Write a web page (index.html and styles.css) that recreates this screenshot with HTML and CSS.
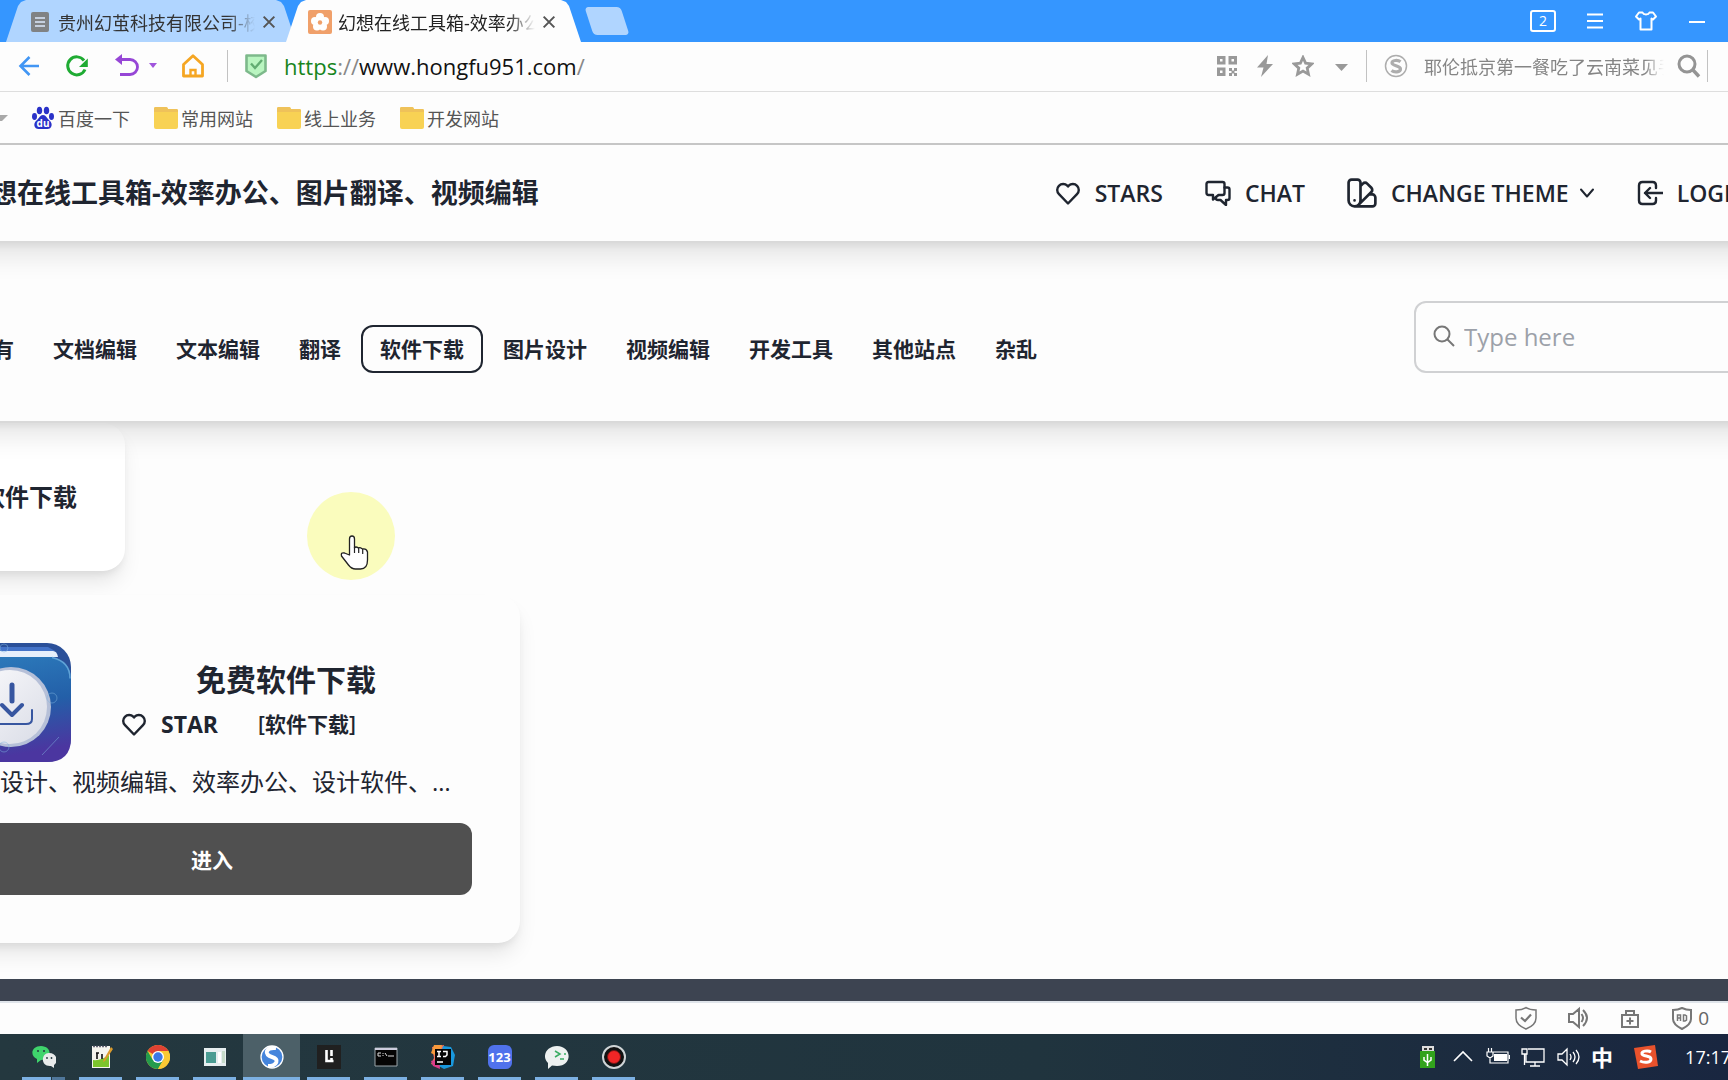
FILE: index.html
```html
<!DOCTYPE html>
<html lang="zh-CN">
<head>
<meta charset="utf-8">
<title>幻想在线工具箱-效率办公、图片翻译、视频编辑</title>
<link rel="stylesheet" href="styles.css">
</head>
<body>
<svg class="defs" aria-hidden="true">
  <symbol id="heart" viewBox="0 0 26 26"><path d="M13 23.500 L4 14.200 A5.900 5.900 0 0 1 12.300 5.700 L13 6.500 L13.700 5.700 A5.900 5.900 0 0 1 22 14.200 Z" fill="none" stroke="currentColor" stroke-width="2.400" stroke-linejoin="round"/></symbol>
  <symbol id="folder" viewBox="0 0 24 24"><path d="M0 2.500Q0 1 1.500 1H12q1.500 0 2 2h8.500Q24 3 24 4.500V21q0 2-2 2H2q-2 0-2-2Z" fill="#f8d254"/><path d="M0 2.500Q0 1 1.500 1H12q1.500 0 2 2h8.500Q24 3 24 4.500V6H0Z" fill="#efc25a"/></symbol>
  <symbol id="sogou" viewBox="0 0 24 24"><circle cx="12" cy="12" r="10.500" fill="none" stroke="currentColor" stroke-width="1.500"/><path d="M16.500 7.800C14 5.800 8 6 8 9s8.500 2.500 8.500 6-6.500 3.500-9 1.500" fill="none" stroke="currentColor" stroke-width="3.200"/></symbol>
</svg>

<header class="titlebar">
  <div class="tab tab-idle">
    <svg class="tab-icon" viewBox="0 0 24 24"><rect x="3" y="2" width="18" height="20" rx="2" fill="#808284"/><path d="M7 8h10M7 12h10M7 16h10" stroke="#dbe9fb" stroke-width="1.600"/></svg>
    <span class="tab-title">贵州幻茧科技有限公司-校园</span>
    <button class="tab-close" aria-label="关闭"><svg viewBox="0 0 12 12"><path d="M2 2l8 8M10 2l-8 8"/></svg></button>
  </div>
  <div class="tab tab-active">
    <svg class="tab-icon" viewBox="0 0 24 24"><rect width="24" height="24" rx="2" fill="#f0a06a"/><g fill="#fff"><circle cx="12" cy="7" r="4"/><circle cx="17" cy="11" r="4"/><circle cx="15" cy="16.500" r="4"/><circle cx="9" cy="16.500" r="4"/><circle cx="7" cy="11" r="4"/><circle cx="12" cy="12" r="4"/></g><circle cx="12" cy="12.500" r="2.200" fill="#f0a06a"/></svg>
    <span class="tab-title">幻想在线工具箱-效率办公、图</span>
    <button class="tab-close" aria-label="关闭"><svg viewBox="0 0 12 12"><path d="M2 2l8 8M10 2l-8 8"/></svg></button>
  </div>
  <button class="new-tab" aria-label="新标签"></button>
  <div class="window-tools">
    <button class="tab-count">2</button>
    <button aria-label="菜单"><svg viewBox="0 0 24 24"><path d="M4 5.500h16M4 12h16M4 18.500h16" stroke-width="2"/></svg></button>
    <button aria-label="皮肤"><svg viewBox="0 0 24 24"><path d="M8.500 3.500C9.500 6 14.500 6 15.500 3.500H19L22 7.500 19 10.500 17.500 9.500V20.500H6.500V9.500L5 10.500 2 7.500 5 3.500Z" stroke-width="2" stroke-linejoin="round"/></svg></button>
    <button aria-label="最小化"><svg viewBox="0 0 24 24"><path d="M4 13h16" stroke-width="2"/></svg></button>
  </div>
</header>

<div class="toolbar">
  <nav class="history">
    <button aria-label="后退"><svg viewBox="0 0 24 24"><path d="M22 12H4M12.500 3L3.500 12l9 9" stroke="#4296f4" stroke-width="2.600"/></svg></button>
    <button aria-label="刷新"><svg viewBox="0 0 24 24"><path d="M20 15.500A9 9 0 1 1 19 6.500" stroke="#1fab33" stroke-width="3"/><path d="M22.800 4.500V13H14Z" fill="#1fab33"/></svg></button>
    <div class="undo">
      <button aria-label="恢复"><svg viewBox="0 0 24 24"><path d="M5 5.500h10a7.500 7.500 0 0 1 0 15H5" stroke="#9646d6" stroke-width="2.800"/><path d="M0 5.500L7 0v11Z" fill="#9646d6"/></svg></button>
      <svg class="mini-caret" viewBox="0 0 8 6"><path d="M0 0h8L4 5Z" fill="#a055dc"/></svg>
    </div>
    <button aria-label="主页"><svg viewBox="0 0 24 24"><path d="M2.500 10.500L12 1.800l9.500 8.700V22h-19Z" stroke="#f5a623" stroke-width="2.800" stroke-linejoin="round"/><path d="M9.500 22v-6h5v6" stroke="#f5a623" stroke-width="2.400"/></svg></button>
  </nav>
  <span class="divider"></span>
  <svg class="shield" viewBox="0 0 24 26"><path d="M2.500 2.500h19V18L12 24 2.500 18Z" fill="#b9f5c0" stroke="#7db98b" stroke-width="2.600" stroke-linejoin="round"/><path d="M7 10.500l4 4.500 7-8" fill="none" stroke="#62ad72" stroke-width="2.400"/></svg>
  <div class="address" role="textbox" aria-label="地址" contenteditable="true"><span class="scheme">https</span><span class="slashes">://</span>www.hongfu951.com<span class="slashes">/</span></div>
  <div class="page-tools">
    <button aria-label="二维码"><svg viewBox="0 0 22 22"><path d="M2.500 2.500h5.500v5.500h-5.500ZM14 2.500h5.500v5.500H14ZM2.500 14h5.500v5.500h-5.500Z" stroke="#999" stroke-width="3"/><path d="M13 13h3v3h-3ZM18 13h3v3h-3ZM15.500 15.500h3v3h-3ZM13 18h3v3h-3ZM18 18h3v3h-3Z" fill="#999"/></svg></button>
    <button aria-label="加速"><svg viewBox="0 0 22 22"><path d="M14 0L3 12.500h6.500L7 22 19 9H12.500Z" fill="#999"/></svg></button>
    <button aria-label="收藏"><svg viewBox="0 0 22 22"><path d="M11 2.500l2.600 5.700 6.200.7-4.600 4.200 1.300 6.100-5.500-3.100-5.500 3.100 1.300-6.100L2.200 8.900l6.200-.7Z" stroke="#999" stroke-width="2.800"/></svg></button>
    <button aria-label="更多"><svg viewBox="0 0 22 22"><path d="M5 9h13l-6.500 7Z" fill="#999"/></svg></button>
  </div>
  <span class="divider"></span>
  <form class="engine">
    <svg class="engine-logo" viewBox="0 0 24 24"><use href="#sogou"/></svg>
    <input class="engine-input" aria-label="搜索" placeholder="耶伦抵京第一餐吃了云南菜见手青">
    <button type="button" aria-label="搜索"><svg viewBox="0 0 24 24"><circle cx="10" cy="10" r="8" stroke="#949494" stroke-width="3"/><path d="M16 16l6 6.500" stroke="#949494" stroke-width="3.400"/></svg></button>
  </form>
  <span class="divider"></span>
</div>

<nav class="bookmarks">
  <svg class="mini-caret" viewBox="0 0 8 6"><path d="M0 0h8L2 6H0Z" fill="#a9a9a9"/></svg>
  <a href="#baidu"><svg viewBox="0 0 24 24"><g fill="#2a32c8"><ellipse cx="8.500" cy="4.500" rx="2.700" ry="3.800"/><ellipse cx="15.500" cy="4.500" rx="2.700" ry="3.800"/><ellipse cx="3.500" cy="10.500" rx="2.500" ry="3.400"/><ellipse cx="20.500" cy="10.500" rx="2.500" ry="3.400"/><path d="M12 9c3 0 4 3.500 6.500 5.500 4 3.500 2 8.500-2 8.500H7.500c-4 0-6-5-2-8.500C8 12.500 9 9 12 9Z"/></g><text class="paw-text" x="12" y="21" text-anchor="middle" fill="#fff">du</text></svg>百度一下</a>
  <a href="#common"><svg viewBox="0 0 24 24"><use href="#folder"/></svg>常用网站</a>
  <a href="#online"><svg viewBox="0 0 24 24"><use href="#folder"/></svg>线上业务</a>
  <a href="#dev"><svg viewBox="0 0 24 24"><use href="#folder"/></svg>开发网站</a>
</nav>

<main class="viewport">
  <div class="page">
    <header class="site-header">
      <h1>幻想在线工具箱-效率办公、图片翻译、视频编辑</h1>
      <nav class="site-nav">
        <a href="#stars"><svg viewBox="0 0 26 26"><use href="#heart"/></svg>STARS</a>
        <a href="#chat"><svg viewBox="0 0 26 26"><path d="M3.500 2h14q2 0 2 2v9q0 2-2 2h-4L8 19.500V15H3.500q-2 0-2-2V4q0-2 2-2Z"/><path d="M19.500 7.500h3q2 0 2 2v8.500q0 2-2 2h-1.500v5L15.500 20H13q-2 0-2.500-2"/></svg>CHAT</a>
        <button><svg class="swatch" viewBox="0 0 24 24"><path d="M7 21a4 4 0 01-4-4V5a2 2 0 012-2h4a2 2 0 012 2v12a4 4 0 01-4 4zm0 0h12a2 2 0 002-2v-4a2 2 0 00-2-2h-2.343M11 7.343l1.657-1.657a2 2 0 012.828 0l2.829 2.829a2 2 0 010 2.828l-8.486 8.485M7 17h.01" transform="translate(-2.300 -2.300) scale(1.190)"/></svg>CHANGE THEME<svg class="chevron" viewBox="0 0 16 16"><path d="M2 4.500l6 7 6-7"/></svg></button>
        <a href="#login"><svg viewBox="0 0 26 26"><path d="M19 8V5.500q0-3.500-3.500-3.500h-10Q2 2 2 5.500v15Q2 24 5.500 24h10q3.500 0 3.500-3.500V18M26 13H8M13 8l-5 5 5 5"/></svg>LOGIN</a>
      </nav>
    </header>

    <section class="filters">
      <div class="categories">
        <button>所有</button><button>文档编辑</button><button>文本编辑</button><button>翻译</button><button class="selected">软件下载</button><button>图片设计</button><button>视频编辑</button><button>开发工具</button><button>其他站点</button><button>杂乱</button>
      </div>
      <label class="search">
        <svg viewBox="0 0 22 22"><circle cx="9" cy="9" r="7.500"/><path d="M14.500 14.500l6.500 6.500"/></svg>
        <input type="text" placeholder="Type here" aria-label="搜索工具">
      </label>
    </section>

    <h2 class="crumb">软件下载</h2>

    <article class="card">
      <div class="card-top">
        <svg class="card-image" viewBox="0 0 119 119" role="img" aria-label="软件下载图标">
          <defs><linearGradient id="cover" x1="0" y1="0" x2="0.200" y2="1"><stop offset="0" stop-color="#2d7dbd"/><stop offset="0.550" stop-color="#235fa8"/><stop offset="1" stop-color="#4b36a0"/></linearGradient><linearGradient id="disc" x1="0" y1="0" x2="1" y2="1"><stop offset="0" stop-color="#fafafc"/><stop offset="1" stop-color="#d9dce6"/></linearGradient></defs>
          <rect width="119" height="119" rx="24" fill="#2b5099"/>
          <path d="M0 8H101q4 0 5 6H0Z" fill="#e6effb"/><path d="M0 4H96l7 4H0Z" fill="#4473c8"/>
          <path d="M0 14H100q19 4 19 22V95q0 24-24 24H24Q0 119 0 95Z" fill="url(#cover)"/>
          <path d="M100 14.500q18 4 18 21" fill="none" stroke="#60a3d7" stroke-width="1.500"/>
          <circle cx="59" cy="64" r="40" fill="#b6c0d8"/><circle cx="58" cy="64" r="37" fill="url(#disc)"/>
          <g fill="none" stroke="#3756a0" stroke-linecap="round" stroke-linejoin="round"><path d="M60 42V58" stroke-width="5"/><path d="M50 62l10 10 10-10" stroke-width="4"/><path d="M80 67v9q0 5-6 5H46q-6 0-6-5V67" stroke-width="2"/></g>
          <g fill="none" stroke="#80b4df" opacity="0.500"><circle cx="52" cy="5" r="4"/><circle cx="100" cy="55" r="5"/><circle cx="52" cy="104" r="5"/><path d="M90 112l17-18" stroke-width="1"/></g>
        </svg>
        <div class="card-head">
          <h3>免费软件下载</h3>
          <div class="card-actions">
            <button class="star"><svg viewBox="0 0 26 26"><use href="#heart"/></svg>STAR</button>
            <span class="tag">[软件下载]</span>
          </div>
        </div>
      </div>
      <p class="summary">图片设计、视频编辑、效率办公、设计软件、影音播放、系统工具</p>
      <button class="enter">进入</button>
    </article>
  </div>
  <footer class="site-footer"></footer>
  <svg class="pointer" viewBox="0 0 88 88" aria-hidden="true"><circle cx="44" cy="44" r="44" fill="#fafcbd"/><path d="M42.500 63V47q0-3 2.500-3t2.500 3v9q1-2 4 0 1-1 4 1 4-1 5 3v8q0 9-7 9h-5q-4 0-7-4l-7-9q-1-4 3-3Z" fill="#fff" stroke="#222" stroke-width="1.300" stroke-linejoin="round"/><path d="M47.500 55v6M51.700 56v5M55.700 57v5" stroke="#222" stroke-width="1.200"/></svg>
</main>

<div class="statusbar">
  <svg viewBox="0 0 24 24"><path d="M12 1.500C9 3.500 5 4 2 4v8c0 5 5 9 10 11 5-2 10-6 10-11V4c-3 0-7-.500-10-2.500Z"/><path d="M7 11.500l4 3.500 6-6.500" stroke-width="2.200"/></svg>
  <svg viewBox="0 0 24 24"><path d="M3 8h4l6-5v18l-6-5H3Z" stroke-width="2"/><path d="M15.500 8q3 4 0 8M17 4q8 8 0 16" stroke-width="2"/></svg>
  <svg viewBox="0 0 24 24"><path d="M4 9h16v12H4ZM8 9V5h8v4M12 11.500v7M8.500 15h7" stroke-width="2"/></svg>
  <span class="ad-count"><svg viewBox="0 0 24 24"><path d="M12 2C9 3.500 5 4 3 4v9c0 4 5 8 9 10 4-2 9-6 9-10V4c-2 0-6-.500-9-2Z" stroke-width="2"/><path d="M7.500 15V9h3v6M7.500 12h3M13.500 9h1.500l1.500 1v4l-1.500 1h-1.500Z"/></svg>0</span>
</div>

<footer class="taskbar">
  <div class="apps">
    <button class="app app-grouped" aria-label="微信"><svg viewBox="0 0 24 24"><path d="M9 1c11 0 12 14 0 14l-4 3v-4C-3 10 0 1 9 1Z" fill="#3fd46c"/><path d="M17 8c9 0 9 10 5 12v3l-3-2C8 22 9 8 17 8Z" fill="#e8ebeb"/><g fill="#24383f"><circle cx="6" cy="6" r="1"/><circle cx="12" cy="6" r="1"/><circle cx="15" cy="13" r="0.900"/><circle cx="19.500" cy="13" r="0.900"/></g></svg></button>
    <button class="app" aria-label="记事本"><svg viewBox="0 0 24 24"><path d="M3 1h18v22H3Z" fill="#f5f5ee"/><path d="M4 15q8 1 16-5v12H4Z" fill="#7cc52c"/><path d="M8 8v6M7 8h3M13 9v5" stroke="#111" stroke-width="1.600"/><path d="M22 2l2 2-8 12-2 1 1-3Z" fill="#dd9c2c"/><path d="M4 1.500h14" stroke="#667" stroke-width="1.500" stroke-dasharray="2 1"/></svg></button>
    <button class="app" aria-label="Chrome"><svg viewBox="0 0 24 24"><circle cx="12" cy="12" r="12" fill="#fac934"/><path d="M12 12L1.600 6A12 12 0 0 1 22.400 6Z" fill="#df4233"/><path d="M1.600 6A12 12 0 0 0 12 24L17.500 14.500 12 12 6.500 14.500Z" fill="#249b4c"/><path d="M12 6h10.400A12 12 0 0 1 12 24l6-10Z" fill="#fac934"/><circle cx="12" cy="12" r="6" fill="#fff"/><circle cx="12" cy="12" r="4.700" fill="#3b78e7"/></svg></button>
    <button class="app" aria-label="资源"><svg viewBox="0 0 24 24"><path d="M1 3h22v18H1Z" fill="#e6eef0"/><path d="M3 7h10v11H3Z" fill="#4a9c93"/><path d="M15 7h3v11h-3Z" fill="#fff"/><path d="M19 6h3v12h-3Z" fill="#c6dbca"/></svg></button>
    <button class="app current" aria-label="搜狗浏览器"><svg viewBox="0 0 24 24"><circle cx="12" cy="12" r="11" fill="#4585dc" stroke="#fff" stroke-width="1.300"/><path d="M16 3C5 2 4 10 12 12s5 9-4 9" fill="none" stroke="#fff" stroke-width="4"/></svg></button>
    <button class="app" aria-label="LI"><svg viewBox="0 0 24 24"><path d="M0 0h24v24H0Z" fill="#202020"/><path d="M9.500 5v11h7M14.500 5v6M14.500 13v3" fill="none" stroke="#fff" stroke-width="2.600"/></svg></button>
    <button class="app" aria-label="命令行"><svg viewBox="0 0 24 24"><path d="M1 3h22v18H1Z" fill="#050505" stroke="#9ba5aa"/><path d="M1 3h22v2H1Z" fill="#ccd"/><path d="M4 8h3M4 11h3M4 8v3M9 8v1M9 10v1M11 8l2 3M14 11h6" fill="none" stroke="#ddd"/></svg></button>
    <button class="app" aria-label="IDEA"><svg viewBox="0 0 24 24"><path d="M1 2l12-2-4 22-9-3 3-6Z" fill="#f6715e"/><path d="M3 0h8L8 12 0 8Z" fill="#f79a3c"/><path d="M12 1l8 1 4 8-2 11-9 3-7-4Z" fill="#1998dd"/><path d="M0 16l8-2 1 10-7-3Z" fill="#da3c8a"/><path d="M4 4h16v16H4Z" fill="#060606"/><path d="M6 6.500h4M8 6.500v5M6 11.500h4M12 6.500h4V10l-1.500 1.500H12M6 17h6" fill="none" stroke="#fff" stroke-width="1.500"/></svg></button>
    <button class="app app-123" aria-label="123"><span>123</span></button>
    <button class="app" aria-label="微信开发者工具"><svg viewBox="0 0 24 24"><path d="M12 1c15 0 16 20 0 20l-5-.500L3 24v-6C-4 11 2 1 12 1Z" fill="#edf1f0"/><path d="M10 6l5 3-5 3M15 14h4M20 8v2" fill="none" stroke="#39ad63" stroke-width="1.500"/></svg></button>
    <button class="app" aria-label="录屏"><svg viewBox="0 0 24 24"><circle cx="12" cy="12" r="11" fill="#111" stroke="#cfd4d6" stroke-width="2"/><circle cx="12" cy="12" r="6.500" fill="#ef2626" stroke="#701414"/></svg></button>
  </div>
  <div class="tray">
    <svg viewBox="0 0 24 24"><path d="M6 1h12v6H6Z" fill="#ddd"/><path d="M8 3h3v2H8ZM13 3h3v2h-3Z" fill="#333"/><path d="M4 6h15v17H4Z" fill="#32a31c"/><path d="M11.500 9v12M8 12v3l3.500 2.500L15 15v-3" fill="none" stroke="#fff" stroke-width="1.500"/></svg>
    <svg viewBox="0 0 24 24"><path d="M3 16l9-9 9 9" stroke-width="1.600"/></svg>
    <svg viewBox="0 0 24 24"><path d="M7 7h15v11H5M23.500 10v4M1 7h6v4L4 13 1 11ZM2.500 3v4M5.500 3v4M4 13v5h3" stroke-width="1.200"/><path d="M8 9h13v7H8Z" fill="#fff" stroke="none"/></svg>
    <svg viewBox="0 0 24 24"><path d="M7 4h16v13H5V9M14 17v4M9 21h10M1 4h5v5H1ZM3.500 9v11" stroke-width="1.300"/></svg>
    <svg viewBox="0 0 24 24"><path d="M2 9h4l5-5v16l-5-5H2ZM14 9q2 3 0 6M17 7q4 5 0 10M20 5q6 7 0 14" stroke-width="1.300"/></svg>
    <span class="ime">中</span>
    <svg class="ime-logo" viewBox="0 0 24 24"><path d="M0 3L21 0l3 21L4 24Z" fill="#e9522c" stroke="none"/><path d="M17 7C14 5 7 6 8 9s9 1 9 5-7 4-11 2" stroke-width="3"/></svg>
    <time>17:17</time>
  </div>
</footer>
</body>
</html>
```
FILE: styles.css
```css
* { box-sizing: border-box; }
body {
  margin: 0;
  height: 100vh;
  display: flex;
  flex-direction: column;
  overflow: hidden;
  background: #fdfdfd;
  color: #1f2530;
  font-family: "Open Sans", "Noto Sans CJK SC", sans-serif;
  font-size: 18px;
}
button, input { font: inherit; color: inherit; }
button { padding: 0; border: 0; background: none; cursor: pointer; white-space: nowrap; }
a { color: inherit; text-decoration: none; white-space: nowrap; }
svg { display: block; flex: none; fill: none; }
h1, h2, h3, p { margin: 0; }
.defs { position: absolute; width: 0; height: 0; }

/* Browser title bar */
.titlebar { flex: none; display: flex; height: 42px; padding-left: 6px; background: #3596ff; }
.tab {
  display: flex;
  align-items: center;
  width: 290px;
  padding: 2px 19px 0 22px;
  background: #b0d5ff;
  color: #333;
  clip-path: polygon(0 100%, 12px 6px, 15px 2px, 20px 0, calc(100% - 20px) 0, calc(100% - 15px) 2px, calc(100% - 12px) 6px, 100% 100%);
}
.tab-active { width: 295px; margin-left: -10px; padding-right: 24px; background: #fdfdfd; color: #222; }
.tab-icon { width: 24px; height: 24px; }
.tab-title {
  flex: 1;
  margin: 0 6px 0 6px;
  overflow: hidden;
  white-space: nowrap;
  mask-image: linear-gradient(to right, #000 86%, transparent 100%);
}
.tab-close { width: 16px; height: 16px; }
.tab-close svg { width: 16px; height: 16px; stroke: #555; stroke-width: 1.5; }
.new-tab { width: 36px; height: 28px; margin: 7px 0 0 8px; border-radius: 4px; background: #b0d5ff; transform: skewX(18deg); }
.window-tools { display: flex; align-items: center; gap: 27px; margin-left: auto; padding-right: 19px; color: #fff; }
.window-tools svg { width: 24px; height: 24px; stroke: #fff; }
.window-tools button { width: 24px; }
.window-tools .tab-count { width: 26px; height: 22px; border: 2px solid #fff; border-radius: 3px; font-size: 14px; line-height: 18px; }

/* Address row */
.toolbar { flex: none; display: flex; align-items: center; height: 50px; padding: 0 20px 2px 17px; border-bottom: 1px solid #dedede; }
.toolbar svg { width: 24px; height: 24px; }
.history { display: flex; align-items: center; gap: 24px; margin-right: 22px; }
.undo { display: flex; align-items: center; gap: 10px; margin-left: 2px; }
.toolbar .mini-caret, .mini-caret { width: 8px; height: 6px; }
.divider { flex: none; width: 1px; height: 32px; background: #c2c2c2; }
.toolbar .shield { height: 26px; margin: 0 16px; }
.address { flex: 1; color: #111; font-size: 22px; line-height: 32px; outline: 0; white-space: nowrap; }
.scheme { color: #17851c; }
.slashes { color: #888; }
.page-tools { display: flex; gap: 16px; margin-right: 14px; }
.page-tools svg { width: 22px; height: 22px; }
.engine { display: flex; align-items: center; margin: 0 6px 0 17px; }
.engine-logo { color: #adadad; }
.engine-input {
  width: 240px;
  margin: 0 13px 0 16px;
  padding: 2px 0 0;
  border: 0;
  background: none;
  line-height: 28px;
  mask-image: linear-gradient(to right, #000 92%, transparent);
}
.engine-input::placeholder { color: #858585; opacity: 1; }

/* Bookmarks row */
.bookmarks { flex: none; display: flex; align-items: center; gap: 24px; height: 53px; border-bottom: 2px solid #c6c6c6; color: #555; }
.bookmarks .mini-caret { margin-right: -1px; }
.bookmarks a { display: flex; align-items: center; gap: 3px; }
.bookmarks a svg { width: 24px; height: 24px; }
.paw-text { font-size: 10px; font-weight: 700; }

/* Web page */
.viewport { position: relative; flex: 1; display: flex; flex-direction: column; min-height: 0; overflow: hidden; }
.page { flex: 1; min-height: 0; margin: 0 -58px 0 -96px; }
.site-header, .filters {
  position: relative;
  display: flex;
  align-items: center;
  justify-content: space-between;
  background: #fdfdfd;
  box-shadow: 0 20px 25px -5px rgba(0, 0, 0, 0.1), 0 8px 10px -6px rgba(0, 0, 0, 0.1);
}
.site-header { z-index: 2; height: 96px; padding: 0 16px 0 59px; }
.site-header h1 { font-size: 27px; font-weight: 700; line-height: 36px; white-space: nowrap; }
.site-nav { display: flex; font-size: 23px; font-weight: 600; }
.site-nav a, .site-nav button { display: flex; align-items: center; gap: 14px; padding: 0 21px; }
.site-nav svg { width: 26px; height: 26px; stroke: currentColor; stroke-width: 2.4; stroke-linejoin: round; stroke-linecap: round; }
.site-nav .swatch { width: 30px; height: 30px; stroke-width: 1.8; }
.site-nav .chevron { width: 16px; height: 16px; margin-left: -4px; stroke-width: 2; }
.filters { z-index: 1; height: 180px; padding: 12px 12px 0 49px; }
.categories { display: flex; gap: 1px; margin-top: 24px; }
.categories button { height: 48px; padding: 0 17px 2px; border: 2px solid transparent; border-radius: 12px; font-size: 21px; font-weight: 700; }
.categories .selected { border-color: #1f2530; }
.search { display: flex; align-items: center; gap: 9px; width: 360px; height: 72px; padding: 0 17px 2px; border: 2px solid #d0d1d3; border-radius: 12px; }
.search svg { width: 22px; height: 22px; stroke: #777; stroke-width: 2; }
.search input { flex: 1; min-width: 0; padding: 0; border: 0; background: none; outline: 0; font-size: 24px; }
.search input::placeholder { color: #9ca1a9; opacity: 1; }
.crumb, .card { background: #fff; border-radius: 22px; box-shadow: 0 14px 21px -4px rgba(0, 0, 0, 0.1), 0 5px 8px -3px rgba(0, 0, 0, 0.08); }
.crumb { width: max-content; margin: 2px 0 24px 29px; padding: 56px 48px; font-size: 24px; line-height: 36px; }
.card { width: 616px; padding: 48px; background: #fdfdfd; }
.card-top { display: flex; gap: 29px; }
.card-image { width: 119px; height: 119px; }
.card-head { flex: 1; display: flex; flex-direction: column; justify-content: center; padding-bottom: 2px; }
.card-head h3 { font-size: 30px; line-height: 44px; text-align: center; }
.card-actions { display: flex; align-items: center; font-size: 21px; line-height: 44px; font-weight: 700; }
.star { display: flex; align-items: center; gap: 14px; padding: 0 21px; font-size: 23px; line-height: 44px; }
.star svg { width: 26px; height: 26px; }
.tag { padding-left: 19px; font-weight: 600; }
.summary { margin: 2px 0 23px; overflow: hidden; font-size: 24px; line-height: 36px; text-overflow: ellipsis; white-space: nowrap; }
.enter { display: block; width: 100%; height: 72px; border-radius: 12px; background: #505050; color: #fff; font-size: 21px; font-weight: 700; }
.site-footer { position: relative; z-index: 3; flex: none; height: 24px; background: #3d4451; border-bottom: 2px solid #dfe4ea; }
.pointer { position: absolute; z-index: 4; left: 307px; top: 347px; width: 88px; height: 88px; }

/* Status row */
.statusbar { flex: none; display: flex; align-items: center; justify-content: flex-end; gap: 28px; height: 31px; padding: 0 19px 2px 0; color: #666; }
.statusbar svg { width: 24px; height: 24px; stroke: #777; stroke-width: 1.5; }
.ad-count { display: flex; align-items: center; gap: 4px; font-size: 19px; line-height: 24px; }

/* Taskbar */
.taskbar { flex: none; display: flex; height: 46px; overflow: hidden; background: linear-gradient(to right, #24383f, #20343e 60%, #192640); }
.apps { display: flex; padding-left: 15px; }
.app { display: flex; align-items: center; justify-content: center; width: 57px; background: linear-gradient(#7cb0e2, #7cb0e2) center bottom / 43px 3px no-repeat; }
.app svg { width: 24px; height: 24px; }
.app.current { background: linear-gradient(#7cb0e2, #7cb0e2) center bottom / 57px 3px no-repeat #4c6068; }
.app-grouped { background: linear-gradient(to right, #7cb0e2 29px, #24383f 29px, #24383f 30px, #50779a 30px) center bottom / 43px 3px no-repeat; }
.app-123 span { width: 24px; height: 24px; border-radius: 6px; background: #5072ec; color: #fff; font-size: 13px; font-weight: 700; line-height: 24px; }
.tray { display: flex; align-items: center; gap: 11px; margin: 0 -3px 0 auto; color: #fff; }
.tray svg { width: 24px; height: 24px; stroke: #fff; }
.tray svg:first-child { stroke: none; }
.ime { font-size: 22px; font-weight: 700; line-height: 32px; }
.tray .ime-logo { margin-left: 10px; }
.tray time { margin-left: 16px; font-size: 18px; }
```
